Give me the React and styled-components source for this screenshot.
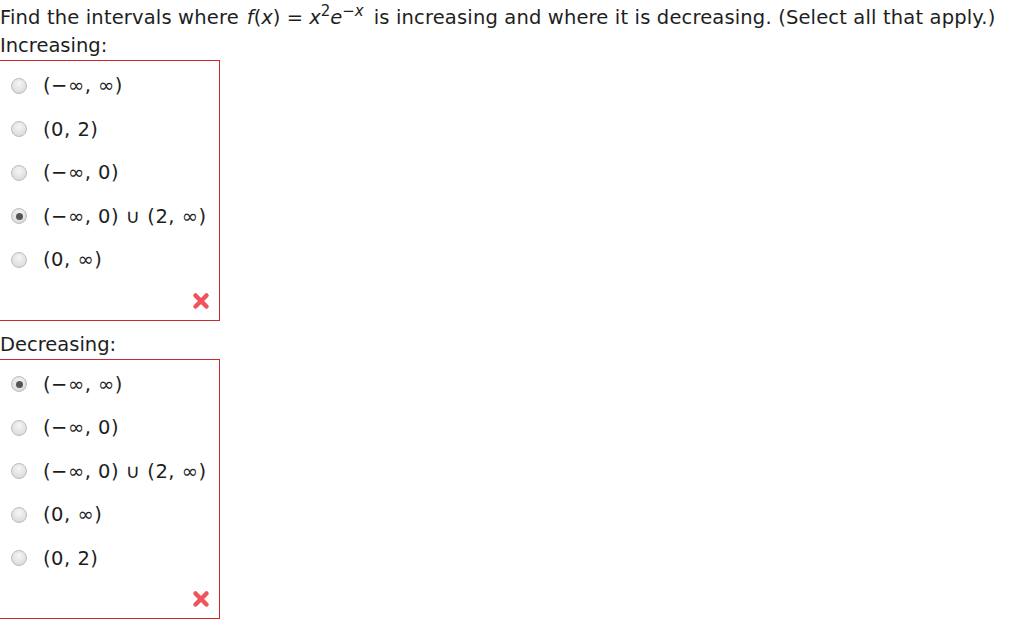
import React from 'react';
import styled, { createGlobalStyle } from 'styled-components';

const GlobalStyle = createGlobalStyle`
  html, body {
    margin: 0;
    padding: 0;
    background: #fff;
    overflow: hidden;
  }
  body {
    font-family: "DejaVu Sans", Verdana, sans-serif;
    font-size: 19.5px;
    color: #1e1e1e;
  }
`;

const Viewport = styled.div`
  width: 100vw;
  overflow: hidden;
`;

const Page = styled.div`
  padding-top: 6px;
`;

const Question = styled.div`
  line-height: 24px;
  white-space: nowrap;
  letter-spacing: 0.16px;
`;

const Math = styled.span`
  margin: 0 10px 0 8px;
  letter-spacing: 0;
  i {
    font-style: italic;
  }
  sup {
    font-size: 15px;
    line-height: 0;
    vertical-align: 8px;
  }
`;

const Label = styled.div`
  line-height: 24px;
  margin-top: ${(p) => p.top}px;
`;

const Box = styled.div`
  width: 222px;
  box-sizing: border-box;
  margin: 2px 0 0 -2px;
  padding-top: 3px;
  border: 1px solid #cc2a2a;
`;

const Row = styled.label`
  display: flex;
  align-items: center;
  height: 43.5px;
  padding-left: 12px;
  white-space: nowrap;
  letter-spacing: 0.5px;
`;

const Radio = styled.span`
  width: 16px;
  height: 16px;
  box-sizing: border-box;
  border-radius: 50%;
  border: 1px solid #bcbcbc;
  background: radial-gradient(circle at 50% 35%, #f6f6f6 0%, #dedede 70%, #cfcfcf 100%);
  display: flex;
  align-items: center;
  justify-content: center;
  margin-right: 16px;
  flex: none;

  &::after {
    content: '';
    display: ${(p) => (p.checked ? 'block' : 'none')};
    width: 7px;
    height: 7px;
    border-radius: 50%;
    background: #555;
  }
`;

const Footer = styled.div`
  height: 38px;
  display: flex;
  justify-content: flex-end;
  align-items: center;
  padding-right: 9px;
`;

const Cross = () => (
  <svg width="18" height="18" viewBox="0 0 18 18">
    <path
      d="M3.5 3.5 L14.5 14.5 M14.5 3.5 L3.5 14.5"
      stroke="#f0545a"
      strokeWidth="4.5"
      strokeLinecap="round"
    />
  </svg>
);

const increasing = [
  { text: '(−∞, ∞)' },
  { text: '(0, 2)' },
  { text: '(−∞, 0)' },
  { text: '(−∞, 0) ∪ (2, ∞)', checked: true },
  { text: '(0, ∞)' },
];

const decreasing = [
  { text: '(−∞, ∞)', checked: true },
  { text: '(−∞, 0)' },
  { text: '(−∞, 0) ∪ (2, ∞)' },
  { text: '(0, ∞)' },
  { text: '(0, 2)' },
];

const Choices = ({ items }) => (
  <Box>
    {items.map((item, i) => (
      <Row key={i}>
        <Radio checked={item.checked} />
        <span>{item.text}</span>
      </Row>
    ))}
    <Footer>
      <Cross />
    </Footer>
  </Box>
);

export default function App() {
  return (
    <Viewport>
      <GlobalStyle />
      <Page>
        <Question>
          Find the intervals where
          <Math>
            <i>f</i>(<i>x</i>) = <i>x</i>
            <sup>2</sup>
            <i>e</i>
            <sup>
              −<i>x</i>
            </sup>
          </Math>
          is increasing and where it is decreasing. (Select all that apply.)
        </Question>
        <Label top={4}>Increasing:</Label>
        <Choices items={increasing} />
        <Label top={12}>Decreasing:</Label>
        <Choices items={decreasing} />
      </Page>
    </Viewport>
  );
}
